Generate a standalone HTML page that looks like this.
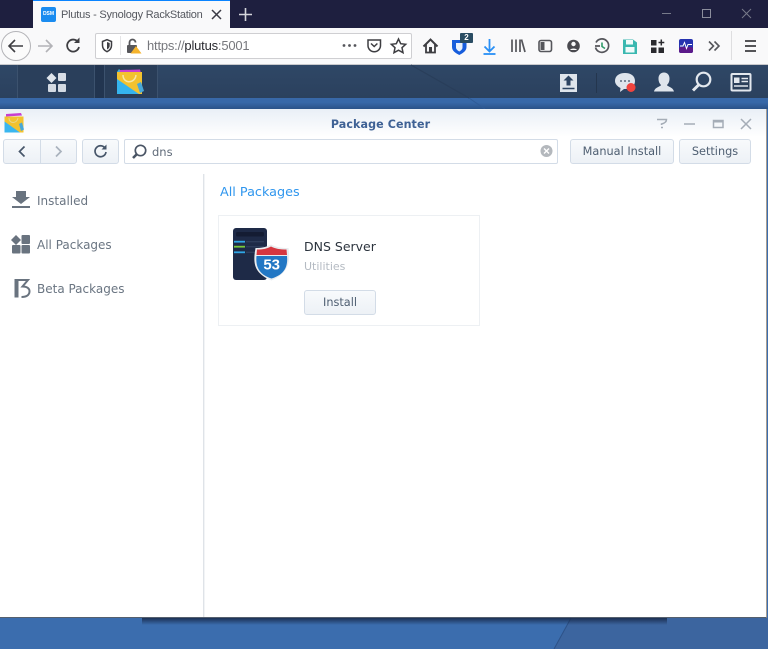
<!DOCTYPE html>
<html><head><meta charset="utf-8"><style>
html,body{margin:0;padding:0}
body{width:768px;height:649px;overflow:hidden;position:relative;background:#3b6dae;font-family:"DejaVu Sans",sans-serif}
.a{position:absolute}
.t{position:absolute;white-space:nowrap;line-height:16px}
.btn{position:absolute;box-sizing:border-box;background:linear-gradient(#f8fafc,#edf1f6);border:1px solid #d3dce7;border-radius:3px;color:#4f5f72;font-size:11.300px;text-align:center}
svg{position:absolute;overflow:visible}
</style></head><body>
<!-- browser tabs -->
<div class="a" style="left:0;top:0;width:768px;height:28px;background:#1e1f3f"></div>
<div class="a" style="left:33px;top:0;width:197px;height:28px;background:#f9f9fa;border-top:1px solid #0a84ff;box-sizing:border-box"></div>
<div class="a" style="left:41px;top:7px;width:15px;height:15px;background:#1a8cf0;border-radius:2px;color:#fff;font:bold 5px/15px 'Liberation Sans',sans-serif;text-align:center">DSM</div>
<div class="t" style="left:61px;top:7px;font:11px/16px 'Liberation Sans',sans-serif;color:#55585f;letter-spacing:-.22px">Plutus - Synology RackStation</div>
<svg style="left:0;top:0" width="768" height="28" fill="none">
<path d="M212 10l9 9M221 10l-9 9" stroke="#3a3a44" stroke-width="1.500"/>
<path d="M245.500 8v13M239 14.500h13" stroke="#d5d6dc" stroke-width="1.600"/>
<path d="M662 13.500h9" stroke="#777a8a" stroke-width="1"/>
<rect x="702.500" y="9.500" width="8" height="8" stroke="#8b8d9c" stroke-width="1"/>
<path d="M742 9l9 9M751 9l-9 9" stroke="#777a8a" stroke-width="1"/>
</svg>
<!-- nav bar -->
<div class="a" style="left:0;top:28px;width:768px;height:36px;background:#f9f9fa;border-bottom:1px solid #c9c9cc"></div>
<div class="a" style="left:95px;top:33px;width:317px;height:26px;background:#fff;border:1px solid #cfcfd2;border-radius:2px;box-sizing:border-box"></div>
<div class="a" style="left:120px;top:36px;width:1px;height:19px;background:#e5e5e7"></div>
<div class="t" style="left:147px;top:38px;font:13px/16px 'Liberation Sans',sans-serif;color:#77787d;letter-spacing:-.2px">https://<span style="color:#2a2a30">plutus</span>:5001</div>
<svg style="left:0;top:28px" width="768" height="36" fill="none" stroke="#3e3e42" stroke-width="1.600">
<circle cx="16" cy="18" r="14.500" stroke="#b4b4b8" stroke-width="1" fill="#fbfbfb"/>
<path d="M23 18H10M15 12l-6 6 6 6"/>
<path d="M38 18h13M46 12l6 6-6 6" stroke="#b3b3b7"/>
<path d="M78 14a6 6 0 1 0 1 5" stroke-width="1.800"/><path d="M79.500 9.500v5.500h-5.500z" fill="#3e3e42" stroke="none"/>
<path d="M102.500 13.500l4.500-1.800 4.500 1.800v4c0 3-2 5-4.500 6.200-2.500-1.200-4.500-3.200-4.500-6.200z" stroke-width="1.500"/><path d="M107 14v7.500c1.500-.8 2.700-2 2.700-4v-2.500z" fill="#3e3e42" stroke="none"/>
<rect x="127" y="17" width="10" height="8" rx="1" fill="#57575b" stroke="none"/><path d="M129.500 17v-2.500a3 3 0 0 1 6 0" stroke="#57575b" stroke-width="1.800"/>
<path d="M136 18l5.500 7.500h-11z" fill="#f5b32c" stroke="none"/>
<circle cx="344" cy="17.500" r="1.400" fill="#55565b" stroke="none"/><circle cx="349.500" cy="17.500" r="1.400" fill="#55565b" stroke="none"/><circle cx="355" cy="17.500" r="1.400" fill="#55565b" stroke="none"/>
<path d="M368 12h12.500v5.500a6.200 6.200 0 0 1-12.500 0z" stroke-width="1.500"/><path d="M371 15.500l3.200 3 3.200-3" stroke-width="1.500"/>
<path d="M398.500 11l2.200 4.700 5 .6-3.700 3.400 1 5-4.500-2.500-4.500 2.500 1-5-3.700-3.400 5-.6z" stroke-width="1.500"/>
<path d="M423.500 18.500l7-7 7 7" stroke-width="2"/><path d="M426 16.500v8h9v-8" stroke-width="1.800"/><rect x="429" y="19" width="3" height="5.500" fill="#3e3e42" stroke="none"/>
<path d="M452 12h14.500v7c0 4-3.500 6-7.200 8-3.800-2-7.300-4-7.300-8z" fill="#175ddc" stroke="none"/><path d="M456 15h6.500v4.500c0 1.800-1.500 3-3.200 4-1.700-1-3.300-2.200-3.300-4z" fill="#e8f0fc" stroke="none"/>
<path d="M489.500 11v12M484.500 18.500l5 5 5-5" stroke="#2a90f5" stroke-width="1.800"/><path d="M483.500 26h12" stroke="#2a90f5" stroke-width="1.800"/>
<path d="M512 11.500v12.500M516 11.500v12.500M520 11.500v12.500M521.500 11.500l3.500 12.500" stroke="#55565b" stroke-width="1.700"/>
<rect x="539" y="12.500" width="12.500" height="11" rx="2" stroke="#55565b"/><rect x="540.500" y="14" width="4" height="8" fill="#55565b" stroke="none"/>
<circle cx="573.500" cy="18" r="6.300" fill="#4a4a4f" stroke="none"/><circle cx="573.500" cy="16" r="2.200" fill="#f9f9fa" stroke="none"/><path d="M570 22c1-2 6-2 7 0z" fill="#f9f9fa" stroke="none"/>
<path d="M596 14.500a6.700 6.700 0 1 1-.5 5M595 18h5" stroke="#55565b" stroke-width="1.700"/><path d="M602 14.500v4l3 2" stroke="#2f9a69" stroke-width="1.600"/>
<path d="M623 11.500h10l4 3v11.500h-14z" fill="#3ab8b0" stroke="none"/><rect x="626" y="12" width="7" height="4.500" fill="#f0fbfa" stroke="none"/><rect x="625.500" y="19" width="9" height="5.500" fill="#f0fbfa" stroke="none"/>
<rect x="651" y="12" width="5.500" height="5.500" fill="#2a2a2e" stroke="none"/><rect x="651" y="19.500" width="5.500" height="5.500" fill="#2a2a2e" stroke="none"/><rect x="658.500" y="19.500" width="5.500" height="5.500" fill="#2a2a2e" stroke="none"/><path d="M661.300 11.500v6M658.500 14.500h5.800" stroke="#2a2a2e" stroke-width="1.500"/>
<rect x="679" y="11" width="14" height="14" rx="2" fill="#2633b0" stroke="none"/><rect x="679" y="19" width="14" height="6" rx="2" fill="#5b1a8a" stroke="none"/><path d="M680 18h3l1.500-3.500 2 6 1.500-4h4" stroke="#fff" stroke-width="1"/>
<path d="M709 13.500l4.500 4.500-4.500 4.500M714.500 13.500l4.500 4.500-4.500 4.500" stroke="#55565b" stroke-width="1.600"/>
<path d="M731.500 3v29" stroke="#dedee0" stroke-width="1"/>
<path d="M745 13h11M745 18h11M745 23h11" stroke-width="1.700"/>
</svg>
<div class="a" style="left:460px;top:33px;width:13px;height:10px;background:#2a4d63;color:#fff;font:bold 8px/10px 'Liberation Sans',sans-serif;text-align:center;border-radius:1px">2</div>
<!-- DSM taskbar -->
<div class="a" style="left:0;top:65px;width:768px;height:44px;background:linear-gradient(#2f5a95,#3a6aa8 40%,#3768a8 85%,#2a5288)"></div>
<div class="a" style="left:0;top:65px;width:768px;height:33px;background:linear-gradient(#2f4766,#2b415e)"></div>
<svg style="left:0;top:65px" width="768" height="44" fill="none">
<path d="M411 0l58 33" stroke="#293e5a" stroke-width="1.200"/>
<path d="M469 33l16 11" stroke="#2f5b96" stroke-width="1"/>
</svg>
<div class="a" style="left:17px;top:65px;width:78px;height:33px;background:#2a3f5b;border-left:1px solid #3c526e;border-right:1px solid #3c526e;box-sizing:border-box"></div>
<div class="a" style="left:95px;top:65px;width:9px;height:33px;background:#223550"></div>
<div class="a" style="left:104px;top:65px;width:54px;height:33px;background:#293d58;border-left:1px solid #3c526e;border-right:1px solid #3c526e;box-sizing:border-box"></div>
<svg style="left:0;top:65px" width="768" height="33" fill="none">
<path d="M51.500 8l5 5-5 5-5-5z" fill="#dfe5ec"/>
<rect x="58" y="8" width="8" height="8" rx="1" fill="#d8dee6"/><rect x="48" y="19" width="8" height="8" rx="1" fill="#d3dae3"/><rect x="58" y="19" width="8" height="8" rx="1" fill="#d3dae3"/>
<path d="M119 4l3 3h-5z" fill="#3cb7d8"/><path d="M120 5l20-.500 1 3.500-22 1z" fill="#c83fd0"/><path d="M117 7h25v22h-25z" fill="#f3c22f"/><path d="M117 14l22 15h-22z" fill="#35b4ee"/><path d="M123 10c0 9 12 9 13 0" stroke="#f6e6a8" stroke-width="1.500"/><path d="M137 19l4-2 3 9-4 2z" fill="#48a8d8"/>
<path d="M560 9h17v18h-17z" fill="#dfe5ec"/><path d="M568.500 10.500l5 5h-3v5h-4v-5h-3z" fill="#2d4462"/><path d="M562.500 23.500h12" stroke="#2d4462" stroke-width="1.500"/>
<path d="M596.500 8v20" stroke="#24364e" stroke-width="1"/>
<path d="M625 8c6 0 10 3 10 8s-4 8-10 8h-1l-4 3 .5-4c-3-1.500-5.500-4-5.500-7 0-5 4-8 10-8z" fill="#dfe5ec"/>
<circle cx="621" cy="16" r="1" fill="#5d6d80"/><circle cx="625" cy="16" r="1" fill="#5d6d80"/><circle cx="629" cy="16" r="1" fill="#5d6d80"/>
<circle cx="631" cy="22.500" r="4.500" fill="#f0443e"/>
<path d="M664 7.500c3.500 0 5.500 2.500 5.500 6 0 3-1 5-2.500 6.500 0 1.500 6 2 7 6.500h-20c1-4.500 7-5 7-6.500-1.500-1.500-2.500-3.500-2.500-6.500 0-3.500 2-6 5.500-6z" fill="#dfe5ec"/>
<circle cx="703.500" cy="14.500" r="6.800" stroke="#e3e8ee" stroke-width="2.200"/><path d="M698.500 20l-5.500 5.500" stroke="#e3e8ee" stroke-width="3"/>
<rect x="731.500" y="9" width="19" height="16.500" rx="1" fill="#2b3f5a" stroke="#e3e8ee" stroke-width="2"/>
<rect x="734" y="12.500" width="5.500" height="5.500" fill="#e3e8ee"/><path d="M741.500 13.500h6.500M741.500 16.500h6.500M734 21h14" stroke="#e3e8ee" stroke-width="1.500"/>
</svg>
<!-- window -->
<div class="a" style="left:0;top:109px;width:767px;height:509px;background:#fff;border-right:1px solid #a89f94;border-bottom:1px solid #55606e;box-sizing:border-box"></div>
<div class="a" style="left:0;top:109px;width:766px;height:28px;background:linear-gradient(#e9eff6,#fff)"></div>
<svg style="left:0;top:618px" width="768" height="31" fill="none">
<path d="M571 0h197v31H554z" fill="#3c659f"/><path d="M571 0l-17 31" stroke="#2d5288" stroke-width="1"/>
</svg>
<div class="a" style="left:142px;top:618px;width:525px;height:7px;background:linear-gradient(rgba(24,42,75,.9),rgba(40,70,120,0));"></div>
<svg style="left:0;top:109px" width="768" height="28" fill="none">
<path d="M6 5l15-1 1 2.500-16 1z" fill="#c83fd0"/><path d="M4.500 7.500h19v16h-19z" fill="#f3c22f"/><path d="M4.500 12.500l15.500 11h-15.500z" fill="#39b6ef"/><path d="M9 9c0 6 8 6 9 0" stroke="#e9d68a" stroke-width="1"/><path d="M19 15l3-1.500 2 7-3 1.500z" fill="#48a8d8"/>
<path d="M657 10.500h9.500c0 2-1 3.500-5 4.500v1M661 18.500h2" stroke="#a5adb7" stroke-width="1.500"/>
<path d="M684 15h11" stroke="#a5adb7" stroke-width="1.500"/>
<rect x="713.500" y="11.500" width="9.500" height="7" stroke="#a5adb7" stroke-width="1.500"/><path d="M713.500 12.500h9.500" stroke="#a5adb7" stroke-width="2"/>
<path d="M741 10l10 10M751 10l-10 10" stroke="#a5adb7" stroke-width="1.500"/>
</svg>
<div class="t" style="left:0;top:117px;width:761px;text-align:center;font-size:11.100px;font-weight:bold;color:#3f6295;letter-spacing:.1px">Package Center</div>
<!-- toolbar -->
<div class="btn" style="left:3px;top:139px;width:74px;height:25px"></div>
<div class="a" style="left:40px;top:140px;width:1px;height:23px;background:#d3dce7"></div>
<div class="btn" style="left:82px;top:139px;width:37px;height:25px"></div>
<svg style="left:0;top:139px" width="150" height="25" fill="none">
<path d="M24.500 7.500l-5 5 5 5" stroke="#47566a" stroke-width="1.700"/>
<path d="M56 7.500l5 5-5 5" stroke="#a9b2bd" stroke-width="1.700"/>
<path d="M105 9a5.500 5.500 0 1 0 1 4" stroke="#47566a" stroke-width="1.700"/><path d="M106.500 5.500v5h-5z" fill="#47566a"/>
</svg>
<div class="a" style="left:124px;top:139px;width:434px;height:25px;box-sizing:border-box;background:#fff;border:1px solid #d3dce7;border-radius:2px"></div>
<svg style="left:124px;top:139px" width="434" height="25" fill="none">
<circle cx="16.500" cy="11.500" r="5.200" stroke="#4a5565" stroke-width="1.700"/><path d="M12.500 15.500l-3.500 3.500" stroke="#4a5565" stroke-width="2.600"/>
<circle cx="422.500" cy="12" r="6" fill="#b4b8bd"/><path d="M420 9.500l5 5M425 9.500l-5 5" stroke="#fff" stroke-width="1.400"/>
</svg>
<div class="t" style="left:152px;top:144px;font-size:11.500px;color:#616c7a">dns</div>
<div class="btn" style="left:570px;top:139px;width:104px;height:25px;line-height:24px">Manual Install</div>
<div class="btn" style="left:679px;top:139px;width:72px;height:25px;line-height:24px">Settings</div>
<!-- sidebar -->
<div class="a" style="left:203px;top:174px;width:1px;height:443px;background:#dfe3e8;box-shadow:1px 0 0 #f2f4f6"></div>
<svg style="left:0;top:185px" width="40" height="120" fill="none">
<path d="M16 6h10v6h4l-9 7-9-7h4z" fill="#69737f"/><path d="M12 22h18" stroke="#69737f" stroke-width="2"/>
<path d="M16 50l5 5-5 5-5-5z" fill="#69737f"/><rect x="21.500" y="50" width="8.500" height="9" rx="1" fill="#69737f"/><rect x="12" y="60" width="8.500" height="8.500" rx="1" fill="#69737f"/><rect x="21.500" y="60" width="8.500" height="8.500" rx="1" fill="#69737f"/>
<path d="M16.500 94v18.500" stroke="#69737f" stroke-width="4"/>
<path d="M15 95H28l-5.500 6.500c4.500 0 7 2 7 4.800 0 3.700-3 5.700-8 5.700" stroke="#69737f" stroke-width="2"/>
</svg>
<div class="t" style="left:37px;top:193px;font-size:12px;color:#6a7582">Installed</div>
<div class="t" style="left:37px;top:237px;font-size:12px;color:#6a7582">All Packages</div>
<div class="t" style="left:37px;top:281px;font-size:12px;color:#6a7582">Beta Packages</div>
<!-- content -->
<div class="t" style="left:220px;top:185px;font-size:12.800px;color:#2f96ee">All Packages</div>
<div class="a" style="left:218px;top:215px;width:262px;height:111px;box-sizing:border-box;border:1px solid #edf0f3;background:#fff"></div>
<svg style="left:225px;top:222px" width="70" height="65" fill="none">
<rect x="8" y="6" width="34" height="52" rx="3" fill="#1e2a47"/>
<rect x="11" y="10" width="28" height="4.500" rx="1.500" fill="#141c33"/>
<path d="M9 19.700h11" stroke="#2fa7e6" stroke-width="1.800"/><path d="M21 19.700h18" stroke="#344261" stroke-width="1"/>
<path d="M9 24.700h11" stroke="#79c93a" stroke-width="1.800"/><path d="M21 24.700h18" stroke="#344261" stroke-width="1"/>
<path d="M9 30.300h11" stroke="#2fa7e6" stroke-width="1.800"/><path d="M21 30.300h18" stroke="#344261" stroke-width="1"/>
<path d="M30.500 26c6 0 11-.8 15.500-3.500 4.500 2.700 10 3.500 17.500 3.500 2 14 0 25-17 32.500C28 51 28 40 30.500 26z" fill="#e9ecef"/>
<path d="M32 27.500c6 0 10-.8 14-3 4 2.200 9 3 15.500 3l.5 5.500H31.500z" fill="#d5363f"/>
<path d="M31.500 34h30.500c1 10-2 18.500-15.500 22.500C33.500 52.500 30.500 44 31.500 34z" fill="#2277c4"/>
<text x="46.700" y="47.500" text-anchor="middle" font-family="'Liberation Sans',sans-serif" font-size="15" font-weight="bold" fill="#fff">53</text>
</svg>
<div class="t" style="left:304px;top:239px;font-size:12.500px;color:#2c343e">DNS Server</div>
<div class="t" style="left:304px;top:259px;font-size:11px;color:#b4bac2">Utilities</div>
<div class="btn" style="left:304px;top:290px;width:72px;height:25px;line-height:24px;">Install</div>
</body></html>
